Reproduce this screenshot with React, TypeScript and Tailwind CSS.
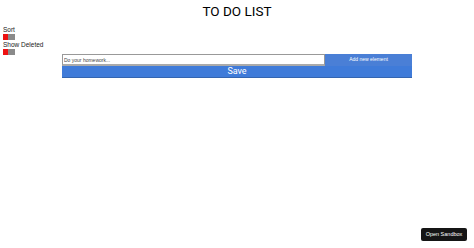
export default function App() {
	return (
		<div className="relative w-[474px] h-[248px] bg-white font-['Roboto',sans-serif] text-black">
			<h1 className="h-[22px] pt-[1px] text-center text-[13.5px] leading-[20px]">TO DO LIST</h1>

			<div className="pl-[3px] pt-[4px] font-['Liberation_Sans',sans-serif] text-[6.5px] leading-[7px] text-[#222]">
				<p>Sort</p>
				<div className="flex h-[6px] my-[1px]">
					<div className="w-[5px] h-full bg-[#ee1111]" />
					<div className="w-[7px] h-full bg-[#8a8a8a]" />
				</div>
				<p>Show Deleted</p>
				<div className="flex h-[6px] my-[1px]">
					<div className="w-[5px] h-full bg-[#ee1111]" />
					<div className="w-[7px] h-full bg-[#8a8a8a]" />
				</div>
			</div>

			<div className="ml-[62px] w-[350px] -mt-[2px] flex flex-col">
				<div className="flex h-[12px]">
					<input
						type="text"
						placeholder="Do your homework..."
						className="flex-1 min-w-0 h-full border border-[#999] border-b-2 border-b-[#aaa] bg-white px-[1px] font-['Liberation_Sans',sans-serif] text-[5px] text-[#333] placeholder:text-[#444] outline-none"
					/>
					<button className="w-[87px] h-full bg-[#4a7fd6] text-white text-[5px] font-['Liberation_Sans',sans-serif] flex items-center justify-center">
						Add new element
					</button>
				</div>
				<button className="h-[12px] bg-[#3f7bd9] border-b border-b-[#3465b0] text-white text-[9px] leading-[11px] font-['Roboto',sans-serif] flex items-center justify-center">
					Save
				</button>
			</div>

			<div className="absolute left-[421px] top-[228px] w-[46px] h-[13px] rounded-[2px] bg-[#151515] text-white text-[5.5px] font-['Liberation_Sans',sans-serif] flex items-center justify-center">
				Open Sandbox
			</div>
		</div>
	)
}
